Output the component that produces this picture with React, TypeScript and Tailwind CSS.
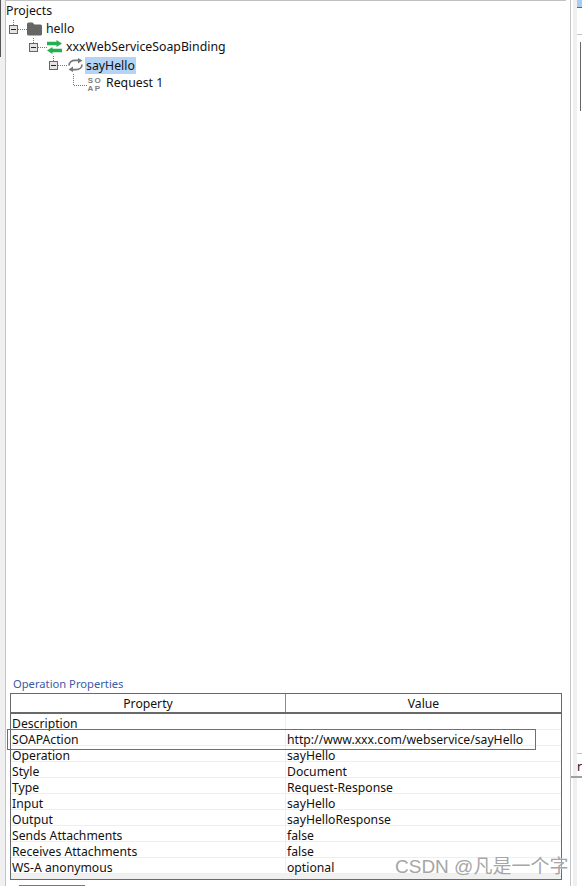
const font = "font-['Noto_Sans','Open_Sans',sans-serif]";

const properties = [
  ["Description", ""],
  ["SOAPAction", "http://www.xxx.com/webservice/sayHello"],
  ["Operation", "sayHello"],
  ["Style", "Document"],
  ["Type", "Request-Response"],
  ["Input", "sayHello"],
  ["Output", "sayHelloResponse"],
  ["Sends Attachments", "false"],
  ["Receives Attachments", "false"],
  ["WS-A anonymous", "optional"],
];

function Expander() {
  return (
    <svg width="19" height="18" viewBox="0 0 19 18" className="shrink-0">
      <path d="M5.5 0V5M10 9.5H19" stroke="#777" strokeDasharray="1 1" fill="none" />
      <rect x="1.5" y="5.5" width="8" height="8" fill="#e4e4e4" stroke="#666" />
      <path d="M3 9.5H8" stroke="#222" />
    </svg>
  );
}

function FolderIcon() {
  return (
    <svg width="15" height="14" viewBox="0 0 15 14" className="shrink-0">
      <path d="M0 2Q0 0.5 1.5 0.5H5.5L7.5 2.5H13.5Q15 2.5 15 4V12Q15 13.5 13.5 13.5H1.5Q0 13.5 0 12Z" fill="#666" />
    </svg>
  );
}

function BindingIcon() {
  return (
    <svg width="15" height="14" viewBox="0 0 15 14" className="shrink-0">
      <path d="M0 1.7H9.5V0L15 3.5L9.5 7V5.3H0Z" fill="#22b14c" />
      <path d="M15 8.7H5.5V7L0 10.5L5.5 14V12.3H15Z" fill="#22b14c" />
    </svg>
  );
}

function OperationIcon() {
  return (
    <svg width="15" height="14" viewBox="0 0 15 14" className="ml-[1px] shrink-0">
      <path d="M1 7.5C1 4 4 2.3 7 2.3H11" stroke="#777" strokeWidth="1.7" fill="none" />
      <path d="M10 0L14.5 2.5L10 5.5Z" fill="#777" />
      <path d="M14 6.5C14 10 11 11.7 8 11.7H4" stroke="#777" strokeWidth="1.7" fill="none" />
      <path d="M5 8.5L0.5 11.5L5 14Z" fill="#777" />
    </svg>
  );
}

function SoapIcon() {
  return (
    <div className="grid w-[14px] shrink-0 grid-cols-2 pt-[3px] text-center font-['Liberation_Sans',sans-serif] text-[8px] leading-[8px] font-bold text-[#808080]">
      <span>S</span>
      <span>O</span>
      <span>A</span>
      <span>P</span>
    </div>
  );
}

function ProjectTree() {
  return (
    <div className="flex flex-col pt-[2px] text-[12.3px] text-[#111]">
      <div className="flex h-[18px] items-center pl-[2px]">
        <Expander />
        <FolderIcon />
        <span className="ml-[4px]">hello</span>
      </div>
      <div className="flex h-[18px] items-center pl-[22px]">
        <Expander />
        <BindingIcon />
        <span className="ml-[4px]">xxxWebServiceSoapBinding</span>
      </div>
      <div className="flex h-[18px] items-center pl-[42px]">
        <Expander />
        <OperationIcon />
        <span className="ml-[2px] bg-[#b3d4f5] px-[1px] leading-[17px]">sayHello</span>
      </div>
      <div className="flex h-[18px] items-center pl-[67px]">
        <svg width="14" height="18" viewBox="0 0 14 18" className="shrink-0">
          <path d="M0.5 0V11.5H14" stroke="#777" strokeDasharray="1 1" fill="none" />
        </svg>
        <SoapIcon />
        <span className="ml-[5px]">Request 1</span>
      </div>
    </div>
  );
}

function PropertiesTable() {
  return (
    <div className="relative ml-[4px] mr-[8px] h-[187px] border border-[#696969] bg-[#f0f0f0] text-[12.2px] leading-[16px] text-[#111]">
      <div className="flex h-[20px] border-b-2 border-[#696969] bg-white">
        <div className="flex w-[275px] items-center justify-center border-r border-[#8a8a8a] pt-[2px]">Property</div>
        <div className="flex flex-1 items-center justify-center pt-[2px]">Value</div>
      </div>
      {properties.map(([name, value]) => (
        <div key={name} className="flex h-[16px] border-b border-[#eeeeee] bg-white leading-[19px] whitespace-nowrap">
          <div className="w-[275px] border-r border-[#eeeeee] pl-[1px]">{name}</div>
          <div className="flex-1 pl-[1px]">{value}</div>
        </div>
      ))}
      {/* red annotation round the SOAPAction row */}
      <div className="absolute top-[35px] left-[-4px] h-[21px] w-[529px] border border-[#f03a3a]" />
    </div>
  );
}

export default function App() {
  return (
    <div className={`relative flex h-[886px] w-[582px] overflow-hidden bg-white ${font}`}>
      {/* left edge */}
      <div className="flex w-[5px] shrink-0 flex-col bg-[#f0f0f0]">
        <div className="h-[57px] w-[1px] bg-[#555]" />
      </div>

      {/* main panel */}
      <div className="flex w-[566px] shrink-0 flex-col border-x border-[#c4c4c4]">
        <div className="mr-[4px] h-[1px] bg-[#c0c0c0]" />
        <div className="flex-1">
          <div className="h-[17px] text-[12.3px] leading-[20px] text-[#111]">Projects</div>
          <ProjectTree />
        </div>
        <div className="h-[211px]">
          <div className="h-[18px] pl-[7px] text-[11.2px] leading-[18px] text-[#3c5aa8]">Operation Properties</div>
          <PropertiesTable />
        </div>
      </div>

      {/* right edge */}
      <div className="flex w-[11px] shrink-0">
        <div className="w-[2px]" />
        <div className="w-[4px] bg-[#f0f0f0]" />
        <div className="flex w-[5px] flex-col">
          <div className="h-[8px] border-b border-[#666] bg-[#a9cdf0]" />
          <div className="mt-[26px] h-[1px] bg-[#c4c4c4]" />
          <div className="mt-[7px] ml-[3px] h-[69px] w-[2px] border-l border-[#666]" />
          <div className="mt-[642px] h-[1px] bg-[#c4c4c4]" />
          <div className="mt-[5px] text-[12.2px] leading-[16px] text-[#111]">r</div>
        </div>
      </div>

      {/* line across the right edge below the r */}
      <div className="absolute top-[776px] left-[571px] h-[2px] w-[11px] bg-[#a0a0a0]" />

      {/* watermark */}
      <div className="absolute top-[855px] left-[395px] text-[19px] leading-[24px] whitespace-nowrap text-[#a6a6a6] [text-shadow:0_0_2px_#fff] font-['Liberation_Sans','Noto_Sans_CJK_SC',sans-serif]">
        CSDN @凡是一个字
      </div>

      {/* top of a button cut off by the bottom edge */}
      <div className="absolute top-[885px] left-[19px] h-[1px] w-[66px] bg-[#777]" />
    </div>
  );
}
